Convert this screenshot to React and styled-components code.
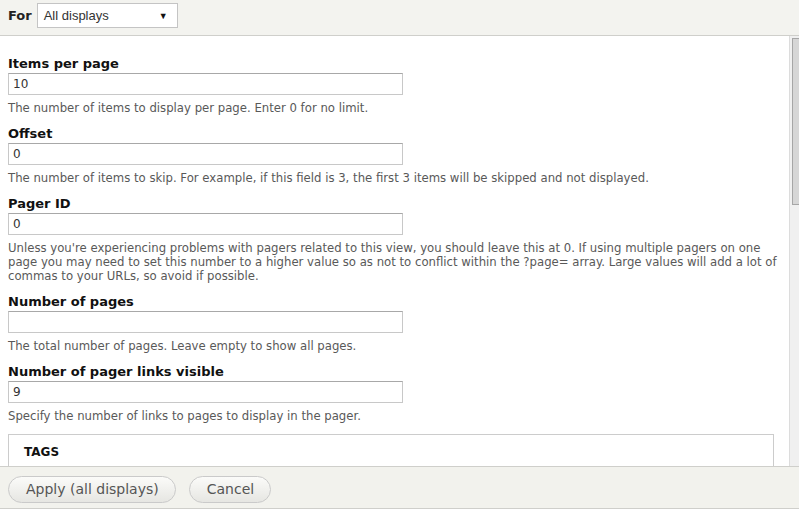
import React from 'react';
import styled, { createGlobalStyle } from 'styled-components';

const GlobalStyle = createGlobalStyle`
  html, body {
    margin: 0;
    padding: 0;
    background: #ffffff;
  }
  body {
    font-family: "DejaVu Sans", Verdana, sans-serif;
    color: #333;
  }
`;

const fields = [
  {
    label: 'Items per page',
    value: '10',
    lines: ['The number of items to display per page. Enter 0 for no limit.'],
  },
  {
    label: 'Offset',
    value: '0',
    lines: ['The number of items to skip. For example, if this field is 3, the first 3 items will be skipped and not displayed.'],
  },
  {
    label: 'Pager ID',
    value: '0',
    lines: [
      "Unless you're experiencing problems with pagers related to this view, you should leave this at 0. If using multiple pagers on one",
      'page you may need to set this number to a higher value so as not to conflict within the ?page= array. Large values will add a lot of',
      'commas to your URLs, so avoid if possible.',
    ],
  },
  {
    label: 'Number of pages',
    value: '',
    lines: ['The total number of pages. Leave empty to show all pages.'],
  },
  {
    label: 'Number of pager links visible',
    value: '9',
    lines: ['Specify the number of links to pages to display in the pager.'],
  },
];

const App = () => {
  return (
    <>
      <GlobalStyle />
      <Page>
        <TopBar>
          <ForLabel>For</ForLabel>
          <Select>
            <span>All displays</span>
            <Arrow>▼</Arrow>
          </Select>
        </TopBar>

        <Body>
          <Content>
            {fields.map((f) => (
              <Field key={f.label}>
                <Label>{f.label}</Label>
                <Input>{f.value}</Input>
                <Description>
                  {f.lines.map((l) => (
                    <div key={l}>{l}</div>
                  ))}
                </Description>
              </Field>
            ))}
            <Fieldset>
              <Legend>TAGS</Legend>
            </Fieldset>
          </Content>
          <Scrollbar>
            <Thumb />
          </Scrollbar>
        </Body>

        <BottomBar>
          <Button>Apply (all displays)</Button>
          <Button>Cancel</Button>
        </BottomBar>
      </Page>
    </>
  );
};

export default App;

const Page = styled.div`
  width: 799px;
  height: 509px;
  display: flex;
  flex-direction: column;
  overflow: hidden;
`;

const TopBar = styled.div`
  height: 36px;
  box-sizing: border-box;
  flex-shrink: 0;
  display: flex;
  align-items: flex-start;
  gap: 5px;
  padding: 3px 8px 0;
  background: #f3f3ef;
  border-bottom: 1px solid #cfcfcb;
`;

const ForLabel = styled.div`
  font-weight: bold;
  font-size: 13px;
  line-height: 25px;
  color: #222;
`;

const Select = styled.div`
  width: 141px;
  height: 25px;
  box-sizing: border-box;
  display: flex;
  align-items: center;
  justify-content: space-between;
  padding: 0 9px 0 6px;
  background: #fff;
  border: 1px solid #c4c4c4;
  font-family: "Liberation Sans", Arial, sans-serif;
  font-size: 13px;
  color: #333;
`;

const Arrow = styled.span`
  font-size: 9px;
  color: #111;
`;

const Body = styled.div`
  flex: 1;
  display: flex;
  overflow: hidden;
`;

const Content = styled.div`
  flex: 1;
  padding: 20px 12px 0 8px;
`;

const Field = styled.div`
  margin-bottom: 11px;
`;

const Label = styled.div`
  font-weight: bold;
  font-size: 13px;
  line-height: 16px;
  color: #111;
  margin-bottom: 1px;
`;

const Input = styled.div`
  width: 395px;
  height: 22px;
  box-sizing: border-box;
  border: 1px solid #c8c8c8;
  border-top-color: #a8a8a8;
  padding: 0 4px;
  font-size: 12px;
  line-height: 20px;
  color: #333;
`;

const Description = styled.div`
  margin-top: 6px;
  font-size: 11.7px;
  line-height: 14px;
  color: #595959;
  white-space: nowrap;
`;

const Fieldset = styled.div`
  border: 1px solid #ccc;
  border-bottom: none;
  padding: 10px 15px 20px;
  margin-top: 8px;
  width: 766px;
  box-sizing: border-box;
`;

const Legend = styled.div`
  font-weight: bold;
  font-size: 12px;
  line-height: 14px;
  color: #111;
`;

const Scrollbar = styled.div`
  width: 12px;
  flex-shrink: 0;
  background: #f0f0f0;
  border-left: 1px solid #dcdcdc;
  box-sizing: border-box;
  padding: 2px 0 0 2px;
`;

const Thumb = styled.div`
  height: 167px;
  background: #d6d6d6;
  border: 1px solid #a6a6a6;
  box-sizing: border-box;
`;

const BottomBar = styled.div`
  height: 43px;
  box-sizing: border-box;
  flex-shrink: 0;
  display: flex;
  align-items: flex-start;
  gap: 13px;
  padding: 9px 8px 0;
  background: #f2f2ed;
  border-top: 1px solid #cfcfcb;
  border-bottom: 1px solid #cfcfcb;
`;

const Button = styled.div`
  height: 27px;
  box-sizing: border-box;
  padding: 0 16px 0 17px;
  border-radius: 14px;
  border: 1px solid #cacaca;
  background: linear-gradient(#fbfbf9, #e6e6e2);
  font-size: 14px;
  line-height: 25px;
  color: #555;
`;
